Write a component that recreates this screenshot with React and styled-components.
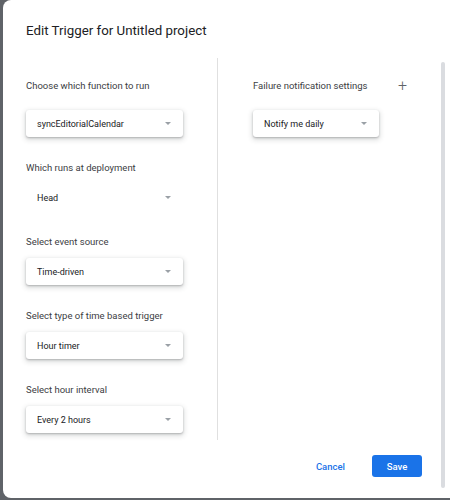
import styled, { createGlobalStyle } from "styled-components";

const GlobalStyle = createGlobalStyle`
  html, body {
    margin: 0;
    padding: 0;
    background: #5f6368;
  }
  body {
    font-family: Roboto, "Noto Sans", sans-serif;
    -webkit-font-smoothing: antialiased;
  }
`;

const Dialog = styled.div`
  margin-left: 3px;
  width: 447px;
  height: 498px;
  background: #fff;
  border-radius: 8px 0 0 8px;
  display: flex;
  box-sizing: border-box;
`;

const Main = styled.div`
  flex: 1;
  display: flex;
  flex-direction: column;
  padding-left: 23px;
`;

const Title = styled.h2`
  margin: 21px 0 0;
  font-size: 13.3px;
  line-height: 20px;
  font-weight: 400;
  color: #202124;
`;

const Body = styled.div`
  margin-top: 17px;
  display: flex;
  height: 382px;
`;

const Column = styled.div`
  width: ${(props) => props.width};
  box-sizing: border-box;
  padding: 20px 0 0 ${(props) => props.inset || "0px"};
  border-right: ${(props) => (props.divided ? "1px solid #e0e0e0" : "none")};
`;

const Section = styled.div`
  margin-bottom: 23px;
`;

const LabelRow = styled.div`
  display: flex;
  align-items: center;
  justify-content: space-between;
  width: 154px;
`;

const Label = styled.div`
  font-size: 9.5px;
  line-height: 16px;
  color: #3c4043;
`;

const Plus = styled.span`
  font-size: 16px;
  line-height: 16px;
  color: #5f6368;
  font-weight: 300;
`;

const Select = styled.div`
  margin-top: ${(props) => (props.spaced ? "16px" : "8px")};
  width: ${(props) => props.width || "157px"};
  height: 27px;
  box-sizing: border-box;
  padding: 0 12px 0 11px;
  display: flex;
  align-items: center;
  justify-content: space-between;
  border-radius: 3px;
  background: #fff;
  box-shadow: ${(props) =>
    props.flat
      ? "none"
      : "0 1px 2px rgba(60,64,67,0.3), 0 2px 5px 1px rgba(60,64,67,0.18)"};
  font-size: 9px;
  color: #202124;
`;

const Caret = styled.span`
  width: 0;
  height: 0;
  border-left: 3.5px solid transparent;
  border-right: 3.5px solid transparent;
  border-top: 3.5px solid #9aa0a6;
`;

const Footer = styled.div`
  display: flex;
  justify-content: flex-end;
  align-items: center;
  gap: 15px;
  padding-right: 19px;
  margin-top: 15px;
`;

const TextButton = styled.button`
  border: none;
  background: none;
  font-family: inherit;
  font-size: 9.5px;
  font-weight: 500;
  color: #1a73e8;
  padding: 0 12px;
  height: 22px;
`;

const SaveButton = styled.button`
  border: none;
  border-radius: 3px;
  background: #1a73e8;
  color: #fff;
  font-family: inherit;
  font-size: 9.5px;
  font-weight: 500;
  width: 50px;
  height: 22px;
`;

const Rail = styled.div`
  width: 9px;
  padding-top: 62px;
  box-sizing: border-box;
`;

const Thumb = styled.div`
  width: 4px;
  height: 426px;
  border-radius: 2px;
  background: #dadce0;
`;

const leftFields = [
  { label: "Choose which function to run", value: "syncEditorialCalendar", spaced: true },
  { label: "Which runs at deployment", value: "Head", flat: true },
  { label: "Select event source", value: "Time-driven" },
  { label: "Select type of time based trigger", value: "Hour timer" },
  { label: "Select hour interval", value: "Every 2 hours" },
];

const App = () => {
  return (
    <>
      <GlobalStyle />
      <Dialog>
        <Main>
          <Title>Edit Trigger for Untitled project</Title>
          <Body>
            <Column width="192px" divided>
              {leftFields.map((field) => (
                <Section key={field.label}>
                  <Label>{field.label}</Label>
                  <Select spaced={field.spaced} flat={field.flat}>
                    {field.value}
                    <Caret />
                  </Select>
                </Section>
              ))}
            </Column>
            <Column width="212px" inset="35px">
              <Section>
                <LabelRow>
                  <Label>Failure notification settings</Label>
                  <Plus>+</Plus>
                </LabelRow>
                <Select spaced width="126px">
                  Notify me daily
                  <Caret />
                </Select>
              </Section>
            </Column>
          </Body>
          <Footer>
            <TextButton>Cancel</TextButton>
            <SaveButton>Save</SaveButton>
          </Footer>
        </Main>
        <Rail>
          <Thumb />
        </Rail>
      </Dialog>
    </>
  );
};

export default App;
